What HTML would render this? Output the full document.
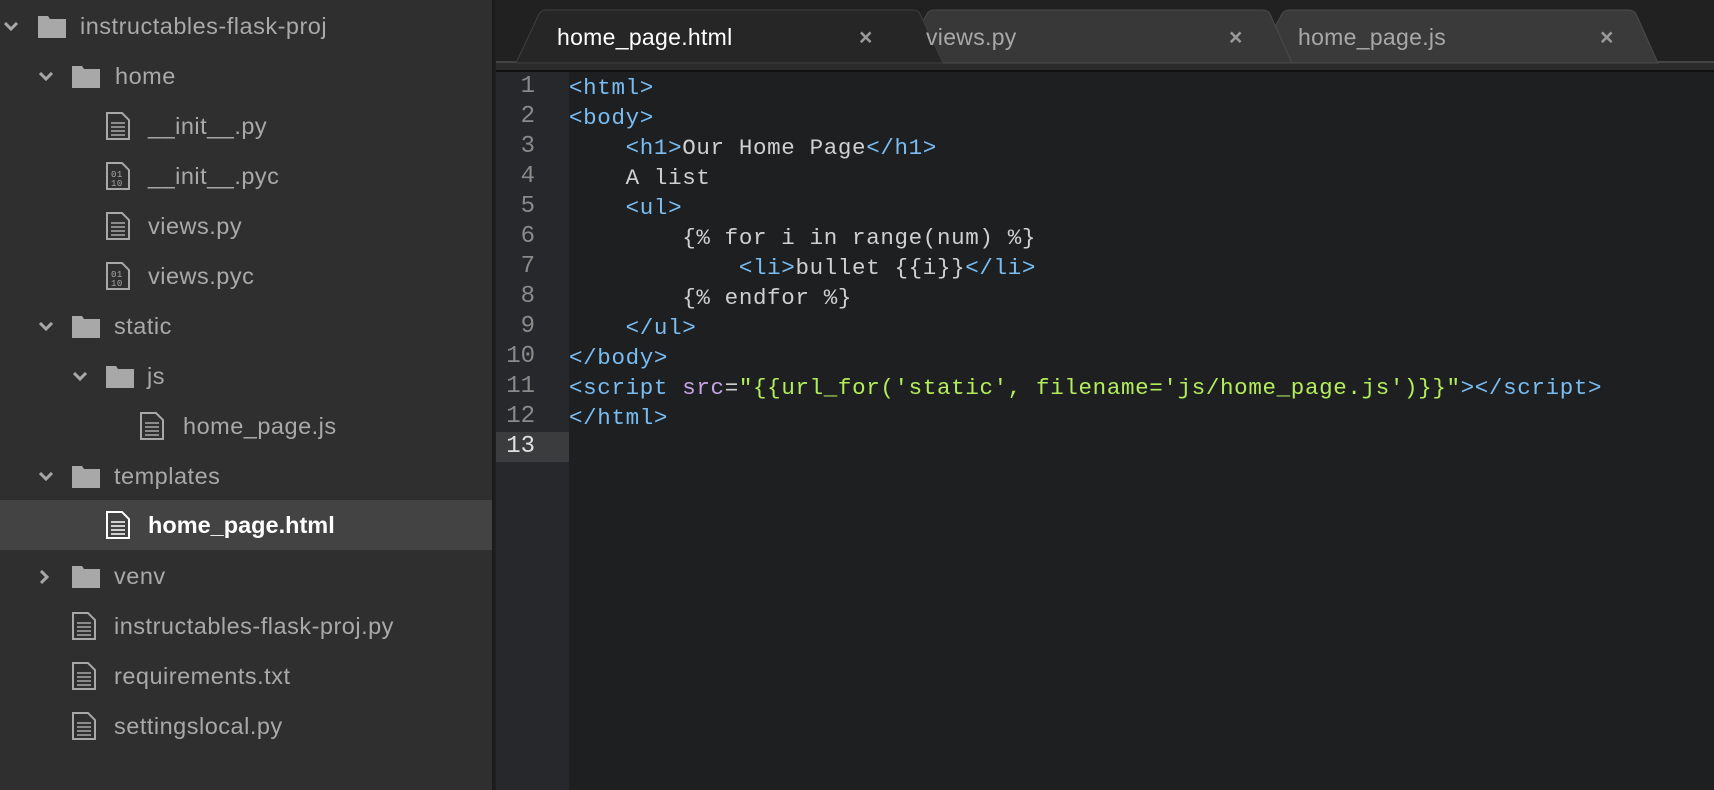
<!DOCTYPE html>
<html><head><meta charset="utf-8"><style>
*{margin:0;padding:0;box-sizing:border-box}
body{width:1714px;height:790px;overflow:hidden;background:#1e1f21;position:relative;font-family:"Liberation Sans",sans-serif}
#side{position:absolute;left:0;top:0;width:494px;height:790px;background:#2f2f2f;border-right:2px solid #1a1a1a}
.row{position:absolute;left:0;width:492px;height:50px;color:#a9a9a9;font-size:23.5px;letter-spacing:0.5px;line-height:50px}
.row.sel{background:#434343;color:#fff;font-weight:bold;letter-spacing:0}
.row span{position:absolute;top:0}
.row svg{position:absolute}
#tabs{position:absolute;left:496px;top:0;width:1218px;height:72px;background:#212121;border-bottom:2px solid #111}
#tabs .strip{position:absolute;left:0;top:61px;width:100%;height:9px;background:#2b2b2b;border-top:2px solid #444}
.tab{position:absolute;top:10px;height:53px}
.tab span{position:absolute;top:14px;font-size:23px;letter-spacing:0.3px}
.tab .x{position:absolute;top:14px;font-size:23px;font-weight:bold;color:#9a9a9a}
#gutter{position:absolute;left:496px;top:72px;width:73px;height:718px;background:#26282b}
.ln{position:absolute;right:34px;width:60px;text-align:right;font-family:"Liberation Mono",monospace;font-size:24px;color:#8a8a8a;height:30px;line-height:30px}
#code{position:absolute;left:569px;top:73px;font-family:"Liberation Mono",monospace;font-size:22.5px;letter-spacing:0.65px;color:#d0d0d0;white-space:pre;line-height:30px}
.t{color:#79bdf2}.a{color:#c5a3e6}.s{color:#b3ee5a}
</style></head><body>
<div id="side">
<svg width="0" height="0" style="position:absolute"><defs>
<g id="fold"><path d="M0 3h10l2 3h16v19H0z" fill="#a8a8a8"/></g>
<g id="file"><path d="M1 1h15l7 7v19H1z" fill="none" stroke="#a8a8a8" stroke-width="2"/><path d="M5 11h14M5 15h14M5 19h14M5 23h14" stroke="#a8a8a8" stroke-width="1.6"/></g>
<g id="filew"><path d="M1 1h15l7 7v19H1z" fill="none" stroke="#fff" stroke-width="2"/><path d="M5 11h14M5 15h14M5 19h14M5 23h14" stroke="#fff" stroke-width="1.6"/></g>
<g id="bin"><path d="M1 1h15l7 7v19H1z" fill="none" stroke="#a8a8a8" stroke-width="2"/><text x="5" y="15" font-size="9" font-family="Liberation Mono" fill="#a8a8a8">01</text><text x="5" y="24" font-size="9" font-family="Liberation Mono" fill="#a8a8a8">10</text></g>
<g id="dn"><path d="M1 1l6 6 6-6" fill="none" stroke="#a8a8a8" stroke-width="3"/></g>
<g id="rt"><path d="M1 1l6 6-6 6" fill="none" stroke="#a8a8a8" stroke-width="3"/></g>
</defs></svg>
<div class="row" style="top:1px"><svg style="left:4px;top:21px" width="16" height="10"><use href="#dn"/></svg><svg style="left:38px;top:12px" width="28" height="26"><use href="#fold"/></svg><span style="left:80px">instructables-flask-proj</span></div>
<div class="row" style="top:51px"><svg style="left:39px;top:21px" width="16" height="10"><use href="#dn"/></svg><svg style="left:72px;top:12px" width="28" height="26"><use href="#fold"/></svg><span style="left:115px">home</span></div>
<div class="row" style="top:101px"><svg style="left:106px;top:11px" width="24" height="28"><use href="#file"/></svg><span style="left:148px">__init__.py</span></div>
<div class="row" style="top:151px"><svg style="left:106px;top:11px" width="24" height="28"><use href="#bin"/></svg><span style="left:148px">__init__.pyc</span></div>
<div class="row" style="top:201px"><svg style="left:106px;top:11px" width="24" height="28"><use href="#file"/></svg><span style="left:148px">views.py</span></div>
<div class="row" style="top:251px"><svg style="left:106px;top:11px" width="24" height="28"><use href="#bin"/></svg><span style="left:148px">views.pyc</span></div>
<div class="row" style="top:301px"><svg style="left:39px;top:21px" width="16" height="10"><use href="#dn"/></svg><svg style="left:72px;top:12px" width="28" height="26"><use href="#fold"/></svg><span style="left:114px">static</span></div>
<div class="row" style="top:351px"><svg style="left:73px;top:21px" width="16" height="10"><use href="#dn"/></svg><svg style="left:106px;top:12px" width="28" height="26"><use href="#fold"/></svg><span style="left:147px">js</span></div>
<div class="row" style="top:401px"><svg style="left:140px;top:11px" width="24" height="28"><use href="#file"/></svg><span style="left:183px">home_page.js</span></div>
<div class="row" style="top:451px"><svg style="left:39px;top:21px" width="16" height="10"><use href="#dn"/></svg><svg style="left:72px;top:12px" width="28" height="26"><use href="#fold"/></svg><span style="left:114px">templates</span></div>
<div class="row sel" style="top:500px"><svg style="left:106px;top:11px" width="24" height="28"><use href="#filew"/></svg><span style="left:148px">home_page.html</span></div>
<div class="row" style="top:551px"><svg style="left:40px;top:19px" width="10" height="16"><use href="#rt"/></svg><svg style="left:72px;top:12px" width="28" height="26"><use href="#fold"/></svg><span style="left:114px">venv</span></div>
<div class="row" style="top:601px"><svg style="left:72px;top:11px" width="24" height="28"><use href="#file"/></svg><span style="left:114px">instructables-flask-proj.py</span></div>
<div class="row" style="top:651px"><svg style="left:72px;top:11px" width="24" height="28"><use href="#file"/></svg><span style="left:114px">requirements.txt</span></div>
<div class="row" style="top:701px"><svg style="left:72px;top:11px" width="24" height="28"><use href="#file"/></svg><span style="left:114px">settingslocal.py</span></div>
</div>

<div id="tabs">
<div class="strip"></div>
<svg style="position:absolute;left:0;top:0" width="1218" height="64">
<path d="M759 63L786 14Q788 10 794 10H1132Q1138 10 1140 14L1162 63Z" fill="#3a3a3a" stroke="#4a4a4a"/>
<path d="M404 63L431 14Q433 10 439 10H766Q772 10 774 14L796 63Z" fill="#383838" stroke="#4a4a4a"/>
<path d="M20 63L43 14Q45 10 51 10H416Q422 10 424 14L447 63Z" fill="#262626" stroke="#3e3e3e"/>
</svg>
<div class="tab" style="left:0"><span style="left:61px;color:#fff">home_page.html</span><b class="x" style="left:363px">×</b></div>
<div class="tab" style="left:0"><span style="left:430px;color:#a8a8a8">views.py</span><b class="x" style="left:733px">×</b></div>
<div class="tab" style="left:0"><span style="left:802px;color:#a8a8a8">home_page.js</span><b class="x" style="left:1104px">×</b></div>
</div>

<div id="gutter">
<div class="ln" style="top:0">1</div><div class="ln" style="top:30px">2</div><div class="ln" style="top:60px">3</div><div class="ln" style="top:90px">4</div><div class="ln" style="top:120px">5</div><div class="ln" style="top:150px">6</div><div class="ln" style="top:180px">7</div><div class="ln" style="top:210px">8</div><div class="ln" style="top:240px">9</div><div class="ln" style="top:270px">10</div><div class="ln" style="top:300px">11</div><div class="ln" style="top:330px">12</div>
<div style="position:absolute;left:0;top:360px;width:73px;height:30px;background:#3b3c3e"></div>
<div class="ln" style="top:360px;color:#e0e0e0">13</div>
</div>

<div id="code"><span class="t">&lt;html&gt;</span>
<span class="t">&lt;body&gt;</span>
    <span class="t">&lt;h1&gt;</span>Our Home Page<span class="t">&lt;/h1&gt;</span>
    A list
    <span class="t">&lt;ul&gt;</span>
        {% for i in range(num) %}
            <span class="t">&lt;li&gt;</span>bullet {{i}}<span class="t">&lt;/li&gt;</span>
        {% endfor %}
    <span class="t">&lt;/ul&gt;</span>
<span class="t">&lt;/body&gt;</span>
<span class="t">&lt;script</span> <span class="a">src</span>=<span class="s">"{{url_for('static', filename='js/home_page.js')}}"</span><span class="t">&gt;&lt;/script&gt;</span>
<span class="t">&lt;/html&gt;</span>
</div>
</body></html>
